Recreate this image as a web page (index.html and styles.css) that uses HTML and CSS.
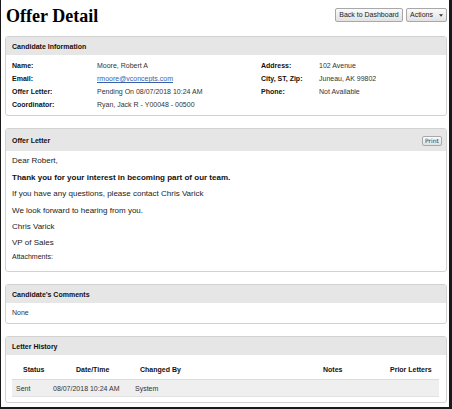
FILE: index.html
```html
<!DOCTYPE html>
<html>
<head>
<meta charset="utf-8">
<title>Offer Detail</title>
<link rel="stylesheet" href="styles.css">
</head>
<body>
<div class="frame">
  <div class="topbar">
    <h1 class="title">Offer Detail</h1>
    <div class="actions">
      <button class="btn btn-back">Back to Dashboard</button>
      <button class="btn btn-actions">Actions <svg class="caret" width="5" height="3" viewBox="0 0 5 3"><path d="M0 0h5L2.5 3z" fill="#333"/></svg></button>
    </div>
  </div>

  <section class="panel">
    <div class="panel-head">Candidate Information</div>
    <div class="panel-body info">
      <dl class="info-col info-left">
        <dt>Name:</dt><dd>Moore, Robert A</dd>
        <dt>Email:</dt><dd><a class="link" href="#">rmoore@vconcepts.com</a></dd>
        <dt>Offer Letter:</dt><dd>Pending On 08/07/2018 10:24 AM</dd>
        <dt>Coordinator:</dt><dd>Ryan, Jack R - Y00048 - 00500</dd>
      </dl>
      <dl class="info-col info-right">
        <dt>Address:</dt><dd>102 Avenue</dd>
        <dt>City, ST, Zip:</dt><dd>Juneau, AK 99802</dd>
        <dt>Phone:</dt><dd>Not Available</dd>
      </dl>
    </div>
  </section>

  <section class="panel">
    <div class="panel-head panel-head-tall">
      <span>Offer Letter</span>
      <button class="btn-print">Print</button>
    </div>
    <div class="panel-body letter">
      <p class="l-dear">Dear Robert,</p>
      <p class="l-thanks">Thank you for your interest in becoming part of our team.</p>
      <p>If you have any questions, please contact Chris Varick</p>
      <p class="l-gap">We look forward to hearing from you.</p>
      <p>Chris Varick</p>
      <p>VP of Sales</p>
      <p class="l-attach">Attachments:</p>
    </div>
  </section>

  <section class="panel">
    <div class="panel-head">Candidate’s Comments</div>
    <div class="panel-body comments">None</div>
  </section>

  <section class="panel panel-last">
    <div class="panel-head">Letter History</div>
    <div class="panel-body history">
      <div class="hist-row hist-head">
        <div class="h-status">Status</div>
        <div class="h-date">Date/Time</div>
        <div class="h-by">Changed By</div>
        <div class="h-notes">Notes</div>
        <div class="h-prior">Prior Letters</div>
      </div>
      <div class="hist-row hist-data">
        <div class="cell">Sent</div>
        <div class="cell">08/07/2018 10:24 AM</div>
        <div class="cell">System</div>
        <div class="cell"></div>
        <div class="cell"></div>
      </div>
    </div>
  </section>
</div>
</body>
</html>
```
FILE: styles.css
```css
html, body {
  margin: 0;
  padding: 0;
  background: #fff;
}

.frame {
  width: 452px;
  height: 409px;
  box-sizing: border-box;
  border-left: 1px solid #1a1a1a;
  border-right: 3px solid #1a1a1a;
  border-bottom: 2px solid #1a1a1a;
  padding: 0 2px 0 4px;
  overflow: hidden;
  font-family: "Liberation Sans", Arial, sans-serif;
  color: #222;
}

.topbar {
  display: flex;
  justify-content: space-between;
  align-items: flex-start;
  height: 36px;
}

.title {
  margin: 6px 0 0 1px;
  font-family: "Liberation Serif", "Times New Roman", serif;
  font-weight: bold;
  font-size: 18px;
  line-height: 20px;
  color: #000;
}

.actions {
  display: flex;
  gap: 3px;
  margin-top: 8px;
}

.btn {
  height: 14px;
  box-sizing: border-box;
  padding: 0 3px;
  border: 1px solid #a8a8a8;
  border-radius: 2px;
  background: linear-gradient(#fafafa, #e2e2e2);
  font-family: "Liberation Sans", Arial, sans-serif;
  font-size: 7px;
  color: #222;
  line-height: 12px;
  display: flex;
  align-items: center;
}

.btn-back {
  width: 68px;
  justify-content: center;
}

.btn-actions {
  width: 41px;
  padding-left: 3px;
  gap: 6px;
}

.caret {
  display: block;
}

.panel {
  border: 1px solid #d2d2d2;
  border-radius: 3px;
  margin-bottom: 12px;
  overflow: hidden;
  background: #fff;
}

.panel-head {
  height: 18px;
  background: #e6e6e6;
  padding: 0 4px 0 6px;
  display: flex;
  align-items: center;
  justify-content: space-between;
  font-size: 7px;
  font-weight: bold;
  color: #111;
}

.panel-head-tall {
  height: 22px;
}

.btn-print {
  width: 20px;
  height: 10px;
  padding: 0;
  border: 1px solid #a8a8a8;
  border-radius: 2px;
  background: linear-gradient(#fbfbfb, #e0e0e0);
  font-family: "DejaVu Sans", "Liberation Sans", sans-serif;
  font-size: 6px;
  color: #333;
  line-height: 8px;
  margin-top: 1px;
}

.panel-body {
  padding: 4px 6px;
  font-size: 7px;
}

.info {
  display: grid;
  grid-template-columns: 249px 1fr;
}

.info-col {
  margin: 0;
  display: grid;
  grid-auto-rows: 13px;
  align-items: center;
}

.info-left {
  grid-template-columns: 85px 1fr;
}

.info-right {
  grid-template-columns: 58px 1fr;
  align-content: start;
}

.info-col dt {
  font-weight: bold;
  color: #111;
}

.info-col dd {
  margin: 0;
  color: #333;
}

.link {
  color: #3b5ea8;
  text-decoration: underline;
}

.letter {
  padding: 2px 6px 8px;
  font-size: 8px;
  color: #222;
}

.letter p {
  margin: 0;
  line-height: 16px;
}

.letter .l-thanks {
  font-weight: bold;
  margin-top: 1px;
  color: #111;
}

.letter .l-gap {
  margin-top: 1px;
}

.letter .l-attach {
  font-size: 7px;
  line-height: 12px;
}

.comments {
  line-height: 12px;
  color: #333;
}

.history {
  padding: 5px 7px 5px 6px;
}

.hist-row {
  display: grid;
  grid-template-columns: 37px 82px 169px 80px 1fr;
  align-items: center;
}

.hist-head {
  height: 19px;
  font-weight: bold;
  color: #111;
}

.h-status { padding-left: 11px; }
.h-date { padding-left: 27px; }
.h-by { padding-left: 9px; }
.h-notes { padding-left: 23px; }
.h-prior { padding-left: 10px; }

.hist-data {
  height: 18px;
  box-sizing: border-box;
  background: #efefef;
  border-top: 1px solid #dcdcdc;
  border-bottom: 1px solid #e2e2e2;
  color: #333;
}

.hist-data .cell {
  padding-left: 4px;
}
```
